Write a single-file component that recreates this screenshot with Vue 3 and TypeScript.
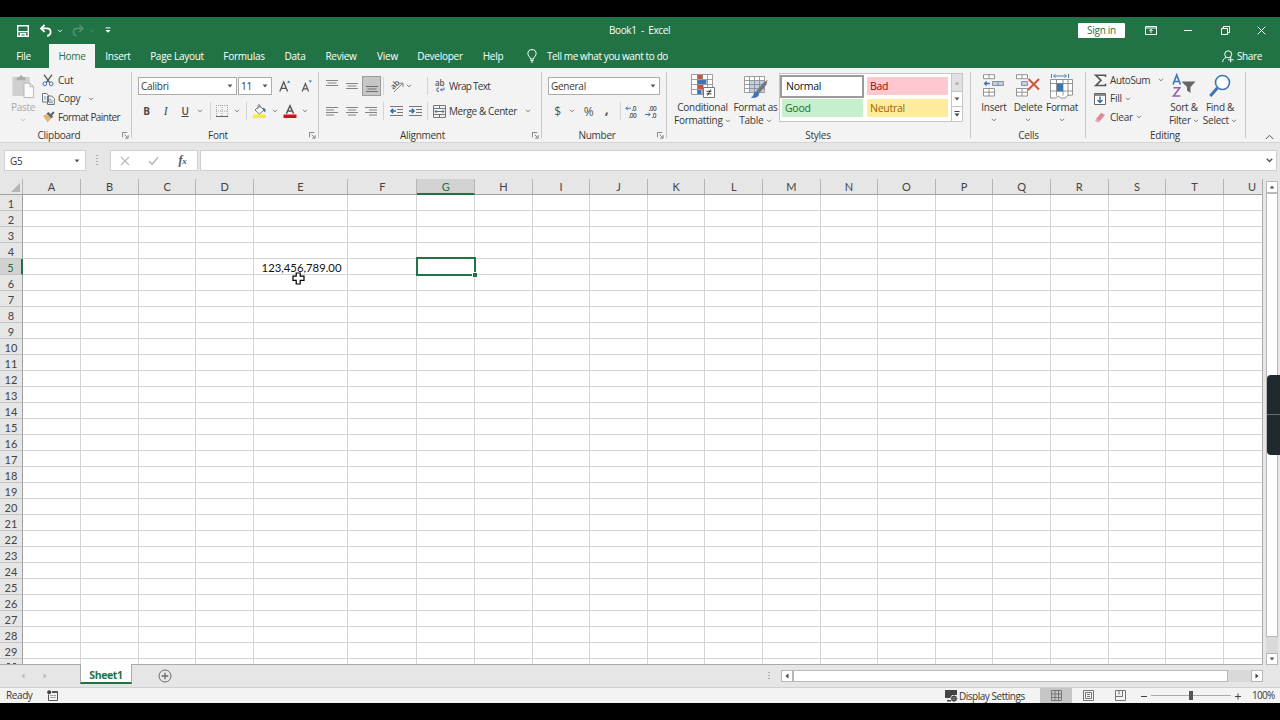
<script setup lang="ts">
interface Column {
  name: string
  width: number
}

const tabs: string[] = ['File', 'Home', 'Insert', 'Page Layout', 'Formulas', 'Data', 'Review', 'View', 'Developer', 'Help']

const defaultWidth = 57.6
const customWidths: Record<string, number> = { A: 58.2, E: 94.1, F: 69.4 }
const columns: Column[] = 'ABCDEFGHIJKLMNOPQRSTU'
  .split('')
  .map((name) => ({ name, width: customWidths[name] ?? defaultWidth }))
const rows: number[] = Array.from({ length: 29 }, (_, i) => i + 1)

const activeColumn = 'G'
const activeRow = 5
const values: Record<string, string> = { E5: '123,456,789.00' }
</script>

<template>
  <div class="screen">
    <svg class="defs" width="0" height="0">
      <symbol id="chev" viewBox="0 0 6 4"><path d="M1 .8 3 2.8 5 .8" fill="none" stroke="currentColor" stroke-width=".9" /></symbol>
      <symbol id="tri" viewBox="0 0 6 4"><path d="M.6.5h4.8L3 3.4z" fill="currentColor" /></symbol>
      <symbol id="launch" viewBox="0 0 8 8"><path d="M.5 6V.5H6M3 3l3.6 3.6M7 3.6V7H3.6" fill="none" stroke="#666" stroke-width=".9" /></symbol>
    </svg>

    <header class="titlebar">
      <div class="quick">
        <svg width="14" height="14" viewBox="0 0 14 14" fill="none" stroke="#fff" stroke-width="1.4"><path d="M1.7 1.7h10.6v10.6H1.7zM2 7.6h10M4.6 12V9.8h4.8V12" /></svg>
        <svg class="undo" width="14" height="14" viewBox="0 0 14 14" fill="none" stroke="#fff" stroke-width="1.8"><path d="M5.6 1 2 4.4l3.6 3.4M2.2 4.4h5.6c5 0 5 6.6.4 7.6" /></svg>
        <svg class="chev"><use href="#chev" /></svg>
        <svg class="redo dim" width="14" height="14" viewBox="0 0 14 14" fill="none" stroke="#fff" stroke-width="1.6"><path d="M8.4 1 12 4.4 8.4 7.8M11.8 4.4H6.2c-5 0-5 6.6-.4 7.6" /></svg>
        <svg class="chev dim"><use href="#chev" /></svg>
        <svg class="more" width="6" height="7" viewBox="0 0 6 7"><path d="M.6.9h4.8" stroke="#fff" /><path d="M.4 3h5.2L3 5.8z" fill="#fff" /></svg>
      </div>
      <div class="title">Book1&nbsp; -&nbsp; Excel</div>
      <div class="window">
        <button class="signin">Sign in</button>
        <svg width="12" height="9" viewBox="0 0 12 9" fill="none" stroke="#fff"><path d="M.5.5h11v8H.5zM.5 2h11M6 7V3.4M4.3 5 6 3.3 7.7 5" /></svg>
        <svg width="10" height="9" viewBox="0 0 10 9" stroke="#fff"><path d="M1 4.5h8" /></svg>
        <svg width="9" height="9" viewBox="0 0 9 9" fill="none" stroke="#fff"><path d="M.5 2.5h6v6h-6zM2.3 2.5V.5h6.2v6.2H6.6" /></svg>
        <svg width="9" height="9" viewBox="0 0 9 9" stroke="#fff"><path d="m.7.7 7.6 7.6M8.3.7.7 8.3" /></svg>
      </div>
    </header>

    <nav class="tabs">
      <span v-for="tab in tabs" :key="tab" class="tab" :class="{ active: tab === 'Home' }">{{ tab }}</span>
      <svg class="bulb" width="10" height="14" viewBox="0 0 10 14" fill="none" stroke="#fff"><path d="M3.3 10V8.9C2.5 7.7.9 6.7.9 4.7a4.1 4.1 0 0 1 8.2 0c0 2-1.6 3-2.4 4.2V10zM3.4 11.4h3.2M3.8 13h2.4" /></svg>
      <span class="tellme">Tell me what you want to do</span>
      <span class="share">
        <svg width="12" height="13" viewBox="0 0 12 13" fill="none" stroke="#fff"><circle cx="6.2" cy="4.3" r="3.5" /><path d="M.6 12c.3-2.4 1.5-3.8 3.6-4.5M8.7 7v5.4M6 9.8h5.6" /></svg>
        Share
      </span>
    </nav>

    <section class="ribbon">
      <div class="group clipboard">
        <div class="body">
          <div class="big paste">
            <svg width="24" height="26" viewBox="0 0 24 26"><path d="M1 3h18v7h-6v13H1z" fill="#d0ced0" /><path d="M5.5 3.5h2.7C8.2.6 11.8.6 11.8 3.5h2.7v3h-9z" fill="#aaa" /><path d="M13 9.5h6.500l3.500 3.500v11.500H13zM19.300 9.700v3.600H23" fill="#fafafa" stroke="#b5b5b5" /></svg>
            <span>Paste</span>
            <svg class="chev"><use href="#chev" /></svg>
          </div>
          <div class="list">
            <div class="line">
              <svg width="12" height="13" viewBox="0 0 12 13" fill="none"><path d="m2 .7 5.7 8M10 .7l-5.7 8" stroke="#555" stroke-width="1.3" /><circle cx="2.8" cy="9.8" r="1.9" stroke="#3b75b5" /><circle cx="9.2" cy="9.8" r="1.9" stroke="#3b75b5" /></svg>
              <span>Cut</span>
            </div>
            <div class="line">
              <svg width="13" height="12" viewBox="0 0 13 12" fill="#f8f8f8" stroke="#666" stroke-width=".9"><path d="M.5.5h4.200l1.800 1.800v6.700h-6zM5.500 3h4.300L12.300 5.500v6H5.500z" /><path d="M1.800 4h2.500M1.800 6h2.500M7 6.300h2M7 8h4M7 9.700h4" stroke="#3b75b5" stroke-width=".7" /></svg>
              <span>Copy</span>
              <svg class="chev"><use href="#chev" /></svg>
            </div>
            <div class="line">
              <svg width="13" height="12" viewBox="0 0 13 12"><path d="m1 5 3.500-2L9 7.500l-3.300 4C4 9 3 7.500 1 5z" fill="#e5b577" /><path d="m4.500 2.500 2-1.500 4.700 4.500-2 2z" fill="#666" /><path d="m8.500 3.200 2.700-2.700 1.300 1.300-2.600 2.800z" fill="#555" /></svg>
              <span class="long">Format Painter</span>
            </div>
          </div>
        </div>
        <div class="caption">Clipboard<svg class="launch"><use href="#launch" /></svg></div>
      </div>

      <div class="group font">
        <div class="body stacked">
          <div class="row r1">
            <div class="combo">Calibri<svg class="tri"><use href="#tri" /></svg></div>
            <div class="combo">11<svg class="tri"><use href="#tri" /></svg></div>
            <svg width="12" height="13" viewBox="0 0 12 13"><path d="m.8 11.500 3.900-9.500 3.900 9.500M2.200 8.300h5" fill="none" stroke="#555" stroke-width="1.300" /><path d="M8 2.800 9.700.5 11.400 2.800z" fill="#3b75b5" /></svg>
            <svg width="12" height="13" viewBox="0 0 12 13"><path d="m1.200 11.500 3.200-8 3.200 8M2.500 8.800h3.900" fill="none" stroke="#555" stroke-width="1.200" /><path d="M7.600.5H11L9.300 2.800z" fill="#3b75b5" /></svg>
          </div>
          <div class="row r2">
            <b class="glyph">B</b>
            <i class="glyph">I</i>
            <u class="glyph">U</u>
            <svg class="chev"><use href="#chev" /></svg>
            <i class="sep" />
            <svg width="12" height="12" viewBox="0 0 12 12" fill="none"><path d="M.5 0v12M6 0v12M11.500 0v12M0 .5h12M0 6h12" stroke="#aaa" stroke-dasharray="1 1" /><path d="M0 11.500h12" stroke="#666" /></svg>
            <svg class="chev"><use href="#chev" /></svg>
            <i class="sep" />
            <svg width="14" height="14" viewBox="0 0 14 14"><path d="M0 10.500h13V14H0z" fill="#f7ee33" /><path d="m2 6 4.800-4.300 4 4.300L6.500 10z" fill="#fafafa" stroke="#777" /><path d="M5 5V1.500c0-1.300 2-1.300 2 0V4" fill="none" stroke="#777" stroke-width=".8" /><path d="M10 3.500c2.500.6 3.100 2.500 2.300 5L10 6.500z" fill="#4a7396" /></svg>
            <svg class="chev"><use href="#chev" /></svg>
            <svg width="14" height="14" viewBox="0 0 14 14"><path d="M.5 10.500h13V14H.5z" fill="#c8141c" /><path d="m3.400 9.600 3.600-8 3.600 8M4.600 7h4.800" fill="none" stroke="#555" stroke-width="1.400" /></svg>
            <svg class="chev"><use href="#chev" /></svg>
          </div>
        </div>
        <div class="caption">Font<svg class="launch"><use href="#launch" /></svg></div>
      </div>

      <div class="group alignment">
        <div class="body stacked">
          <div class="row r1">
            <svg width="12" height="12" viewBox="0 0 12 12" stroke="#777" stroke-width=".9"><path d="M0 .5h12M1.500 3h9M0 5.500h12" /></svg>
            <svg width="12" height="12" viewBox="0 0 12 12" stroke="#777" stroke-width=".9"><path d="M0 3.500h12M1.500 6h9M0 8.500h12" /></svg>
            <span class="pressed"><svg width="12" height="12" viewBox="0 0 12 12" stroke="#666" stroke-width=".9"><path d="M0 6.500h12M1.500 9h9M0 11.500h12" /></svg></span>
            <i class="sep" />
            <svg width="14" height="13" viewBox="0 0 14 13"><path d="M4 12 12.500 3.500M13 7V3.200H9.500" fill="none" stroke="#777" stroke-width=".9" /><text class="tiny" transform="translate(3.5 10)rotate(-45)">ab</text></svg>
            <svg class="chev"><use href="#chev" /></svg>
            <i class="sep" />
            <svg width="12" height="14" viewBox="0 0 12 14"><text x="1" y="7" class="tiny">ab</text><path d="M5 9H3.500Q1.700 10.700 3.500 12.300H5" fill="none" stroke="#555" /><path d="M10 8.500v2.300H6.500M8 9.300 6.500 10.800 8 12.300" fill="none" stroke="#3b75b5" /></svg>
            <span class="text">Wrap Text</span>
          </div>
          <div class="row r2">
            <svg width="12" height="11" viewBox="0 0 12 11" stroke="#777" stroke-width=".9"><path d="M0 1.500h12M0 4h8M0 6.500h12M0 9h8" /></svg>
            <svg width="12" height="11" viewBox="0 0 12 11" stroke="#777" stroke-width=".9"><path d="M0 1.500h12M2 4h8M0 6.500h12M2 9h8" /></svg>
            <svg width="12" height="11" viewBox="0 0 12 11" stroke="#777" stroke-width=".9"><path d="M0 1.500h12M4 4h8M0 6.500h12M4 9h8" /></svg>
            <i class="sep" />
            <svg width="13" height="11" viewBox="0 0 13 11" fill="none" stroke="#777"><path d="M0 .5h13M7 3.500h6M7 6.500h6M0 9.500h13" /><path d="M6 5H1M3.200 2.700.9 5l2.300 2.300" stroke="#2e6da4" stroke-width="1.400" /></svg>
            <svg width="13" height="11" viewBox="0 0 13 11" fill="none" stroke="#777"><path d="M0 .5h13M7 3.500h6M7 6.500h6M0 9.500h13" /><path d="M0 5h5M2.800 2.700 5.100 5 2.800 7.300" stroke="#2e6da4" stroke-width="1.400" /></svg>
            <i class="sep" />
            <svg width="13" height="13" viewBox="0 0 13 13" fill="none" stroke="#777"><path d="M.5.5h12v12H.5zM.5 3.500h12M.5 9.500h12M6.500 0v3.500M6.500 9.500V13" /><path d="M2 6.500h9M3.500 5 2 6.500 3.500 8M9.500 5 11 6.500 9.500 8" stroke="#4a7396" /></svg>
            <span class="text">Merge &amp; Center</span>
            <svg class="chev"><use href="#chev" /></svg>
          </div>
        </div>
        <div class="caption">Alignment<svg class="launch"><use href="#launch" /></svg></div>
      </div>

      <div class="group number">
        <div class="body stacked">
          <div class="row r1">
            <div class="combo">General<svg class="tri"><use href="#tri" /></svg></div>
          </div>
          <div class="row r2">
            <span class="sym">$</span>
            <svg class="chev"><use href="#chev" /></svg>
            <span class="sym">%</span>
            <b class="sym comma">,</b>
            <i class="sep" />
            <svg width="13" height="13" viewBox="0 0 13 13"><path d="M6 3.300H1M2.700 1.500.9 3.300l1.800 1.800" fill="none" stroke="#3b75b5" /><text x="6.500" y="6" class="digits">.0</text><text x="3.500" y="12.500" class="digits">.00</text></svg>
            <svg width="13" height="13" viewBox="0 0 13 13"><path d="M0 9.500h5M3.300 7.700l1.800 1.800-1.800 1.800" fill="none" stroke="#3b75b5" /><text x="3.500" y="6" class="digits">.00</text><text x="6.500" y="12.500" class="digits">.0</text></svg>
          </div>
        </div>
        <div class="caption">Number<svg class="launch"><use href="#launch" /></svg></div>
      </div>

      <div class="group styles">
        <div class="body">
          <div class="big cond">
            <svg width="24" height="25" viewBox="0 0 24 25"><path d="M.5.5h21v20H.5zM.5 5.500h21M.5 10.500h21M.5 15.500h21M6.500.5v20M11.500.5v20M16.500.5v20" fill="#fff" stroke="#888" stroke-width=".8" /><path d="M6.500 1h5v4h-5zM6.500 11h6v4h-6z" fill="#c8523d" /><path d="M6.500 6h9v4h-9zM6.500 16h4v4h-4z" fill="#3b75b5" /><path d="M12.500 13.500h11v10h-11z" fill="#fff" stroke="#777" /><path d="M15.500 17.300h5M15.500 19.800h5M19.700 15.500l-3.200 6" stroke="#333" /></svg>
            <span>Conditional</span>
            <span>Formatting <svg class="chev"><use href="#chev" /></svg></span>
          </div>
          <div class="big fmt">
            <svg width="24" height="25" viewBox="0 0 24 25"><path d="M.5 2.500h20v16H.5z" fill="#fff" /><path d="M5.500 6.500h15v12h-15z" fill="#bdd0e8" /><path d="M.5 2.500h20v16H.5zM.5 6.500h20M.5 10.500h20M.5 14.500h20M5.500 2.500v16M10.500 2.500v16M15.500 2.500v16" fill="none" stroke="#888" stroke-width=".8" /><path d="m23.500 6-1 4.500-7.300 9-3-2.500 6.800-8z" fill="#777" /><path d="M11.500 17.500c2.800-.5 4.200 1.800 3.200 4-1.500 2.500-5 2.800-8.200 2 3.500-.8 2.500-4.500 5-6z" fill="#3b75b5" /></svg>
            <span>Format as</span>
            <span>Table <svg class="chev"><use href="#chev" /></svg></span>
          </div>
          <div class="gallery">
            <div class="swatches">
              <span class="sw normal">Normal</span>
              <span class="sw bad">Bad</span>
              <span class="sw good">Good</span>
              <span class="sw neutral">Neutral</span>
            </div>
            <div class="scroller">
              <span class="off"><svg class="tri up"><use href="#tri" /></svg></span>
              <span><svg class="tri"><use href="#tri" /></svg></span>
              <span><svg width="6" height="6" viewBox="0 0 6 6"><path d="M.5.5h5" stroke="#444" /><path d="M.5 2.500h5L3 5.500z" fill="#444" /></svg></span>
            </div>
          </div>
        </div>
        <div class="caption">Styles</div>
      </div>

      <div class="group cells">
        <div class="body">
          <div class="big">
            <svg width="22" height="25" viewBox="0 0 22 25" fill="#fff" stroke="#888" stroke-width=".9"><path d="M.5.700h11v4H.5zM6 .7v4M.5 14.500h11v7.500H.5zM6 14.500V22M.5 18.200h11" /><path d="M9.500 7.500h11v4h-11zM15 7.500v4" fill="#bdd0e8" /><path d="M7 9.500H1.500M3.700 7.500 1.500 9.500l2.200 2" fill="none" stroke="#3b75b5" stroke-width="1.300" /></svg>
            <span>Insert</span>
            <svg class="chev"><use href="#chev" /></svg>
          </div>
          <div class="big">
            <svg width="24" height="25" viewBox="0 0 24 25" fill="#fff" stroke="#888" stroke-width=".9"><path d="M.5.700h11v4H.5zM6 .7v4M.5 14.500h11v7.500H.5zM6 14.500V22M.5 18.200h11" /><path d="M5.500 7.500h6v4h-6z" fill="#bdd0e8" /><path d="m12.500 5 10.500 10.500M23 5 12 16" fill="none" stroke="#d2553a" stroke-width="2" /></svg>
            <span>Delete</span>
            <svg class="chev"><use href="#chev" /></svg>
          </div>
          <div class="big">
            <svg width="24" height="25" viewBox="0 0 24 25" fill="#fff" stroke="#888" stroke-width=".9"><path d="M.5 5.500h22v15.500l-5 .5-2 2.500h-5l-2-2-3 2h-5zM.5 9.500h22M.5 17h22M6.500 5.500v16M13 5.500v16M18 5.500v16" /><path d="M7 9.500h6v8H7z" fill="#3b75b5" stroke="none" /><path d="M1.500 0v4M18.500 0v4M4 2h12M5.500.3 3.500 2l2 1.700M14.500.3l2 1.700-2 1.700" fill="none" stroke="#3b75b5" /></svg>
            <span>Format</span>
            <svg class="chev"><use href="#chev" /></svg>
          </div>
        </div>
        <div class="caption">Cells</div>
      </div>

      <div class="group editing">
        <div class="body">
          <div class="list">
            <div class="line wide">
              <svg width="13" height="13" viewBox="0 0 13 13" fill="none" stroke="#555" stroke-width="1.600"><path d="M11.500 3V1.300H1.800L7 6.300 1.800 11.500h9.700V9.700" /></svg>
              <span>AutoSum</span>
              <svg class="chev"><use href="#chev" /></svg>
            </div>
            <div class="line">
              <svg width="12" height="12" viewBox="0 0 12 12" fill="#fff" stroke="#666"><path d="M.5.5h11v11H.5z" /><path d="M.5 2h11" stroke-width="1.500" /><path d="M6 3.500v6M3.500 7 6 9.500 8.500 7" fill="none" stroke="#2e6da4" stroke-width="1.400" /></svg>
              <span>Fill</span>
              <svg class="chev"><use href="#chev" /></svg>
            </div>
            <div class="line">
              <svg width="12" height="11" viewBox="0 0 12 11"><path d="M7.200.8 10.800 3 5.800 9.300 2 7z" fill="#e4839a" /><path d="m2 7 3.800 2.300-.6.900H3L1 8.700z" fill="#e8a9b8" /></svg>
              <span>Clear</span>
              <svg class="chev"><use href="#chev" /></svg>
            </div>
          </div>
          <div class="big sort">
            <svg width="24" height="25" viewBox="0 0 24 25" fill="none"><path d="M1 10.500 4.700 1l3.700 9.500M2.300 7.500h4.900" stroke="#3b75b5" stroke-width="1.600" /><path d="M1.500 13.700h6.300L1.500 22h6.800" stroke="#9b5bb0" stroke-width="1.600" /><path d="M9.500 7.500h14l-5 5.500v6l-3.500-2.500V13z" fill="#666" /></svg>
            <span>Sort &amp;</span>
            <span>Filter <svg class="chev"><use href="#chev" /></svg></span>
          </div>
          <div class="big find">
            <svg width="24" height="25" viewBox="0 0 24 25"><circle cx="14.500" cy="8.500" r="7" fill="#fff" stroke="#3b75b5" stroke-width="1.600" /><path d="m9.300 14-7 8" stroke="#3b75b5" stroke-width="3" /></svg>
            <span>Find &amp;</span>
            <span>Select <svg class="chev"><use href="#chev" /></svg></span>
          </div>
        </div>
        <div class="caption">Editing</div>
      </div>
      <svg class="collapse" width="9" height="6" viewBox="0 0 9 6" fill="none" stroke="#555"><path d="m.8 5 3.700-3.700L8.200 5" /></svg>
    </section>

    <section class="formula">
      <div class="namebox">G5<svg class="tri"><use href="#tri" /></svg></div>
      <i class="dots" />
      <div class="fx">
        <svg width="10" height="10" viewBox="0 0 10 10" stroke="#b8b8b8" stroke-width="1.200"><path d="m1 1 8 8M9 1 1 9" /></svg>
        <svg width="11" height="10" viewBox="0 0 11 10" fill="none" stroke="#b8b8b8" stroke-width="1.500"><path d="m1 5 3 3.300L10 1.200" /></svg>
        <span class="fxmark">f<small>x</small></span>
      </div>
      <div class="input"><svg width="7" height="5" viewBox="0 0 7 5" fill="none" stroke="#555" stroke-width="1.400"><path d="m.8.8 2.700 2.700L6.200.8" /></svg></div>
    </section>

    <main class="workspace">
      <div class="sheet">
        <div class="heads">
          <div class="corner"><svg width="9" height="9" viewBox="0 0 9 9"><path d="M9 0v9H0z" fill="#b4b4b4" /></svg></div>
          <div v-for="c in columns" :key="c.name" class="head" :class="{ on: c.name === activeColumn }" :style="{ width: c.width + 'px' }">{{ c.name }}</div>
        </div>
        <div v-for="r in rows" :key="r" class="gridrow">
          <div class="rownum" :class="{ on: r === activeRow }">{{ r }}</div>
          <div v-for="c in columns" :key="c.name" class="cell" :style="{ width: c.width + 'px' }">
            {{ values[c.name + r] }}
            <i v-if="c.name === activeColumn && r === activeRow" class="selection" />
          </div>
        </div>
        <div class="gridrow last">
          <div class="rownum"><i /><i /></div>
          <div v-for="c in columns" :key="c.name" class="cell" :style="{ width: c.width + 'px' }" />
        </div>
      </div>
      <div class="vscroll">
        <span class="btn"><svg class="tri up"><use href="#tri" /></svg></span>
        <span class="thumb" />
        <span class="btn"><svg class="tri"><use href="#tri" /></svg></span>
      </div>
      <svg class="pointer" width="13" height="13" viewBox="0 0 13 13"><path d="M4.200 1h4v3.200H12v4.200H8.200V12h-4V8.400H1V4.200h3.200z" fill="#fff" stroke="#000" stroke-width="1.200" /></svg>
      <div class="dock"><i /></div>
    </main>

    <section class="sheetbar">
      <svg class="nav" width="4" height="6" viewBox="0 0 4 6"><path d="M3.500.5v5L.5 3z" fill="#b9b9b9" /></svg>
      <svg class="nav" width="4" height="6" viewBox="0 0 4 6"><path d="M.5.5v5l3-2.500z" fill="#b9b9b9" /></svg>
      <span class="sheettab">Sheet1</span>
      <svg class="add" width="14" height="14" viewBox="0 0 14 14" fill="none" stroke="#6b6b6b"><circle cx="7" cy="7" r="6" /><path d="M7 3.700v6.600M3.700 7h6.600" stroke-width="1.300" /></svg>
      <i class="dots" />
      <div class="hscroll">
        <span class="btn"><svg width="4" height="6" viewBox="0 0 4 6"><path d="M3.500.5v5L.5 3z" fill="#444" /></svg></span>
        <span class="thumb" />
        <span class="btn"><svg width="4" height="6" viewBox="0 0 4 6"><path d="M.5.5v5l3-2.500z" fill="#444" /></svg></span>
      </div>
    </section>

    <footer class="status">
      <span class="ready">Ready</span>
      <svg width="11" height="11" viewBox="0 0 11 11"><path d="M1.500 4.500v6h9v-9H5.500" fill="none" stroke="#555" /><path d="M5 1h5.500v2H5z" fill="#555" /><circle cx="2.200" cy="2.200" r="2" fill="#444" /><path d="M3.500 5.500h6M3.500 7.500h6" stroke="#555" stroke-dasharray="1 1" /></svg>
      <span class="display">
        <svg width="13" height="12" viewBox="0 0 13 12"><path d="M0 0h12v5H7l-2 3H0zM2 10h4v1.500H2z" fill="#444" /><circle cx="9" cy="8.500" r="2.200" fill="none" stroke="#444" stroke-width="1.300" /><path d="M9 5v7M5.600 8.500h7M6.600 6l4.800 5M11.400 6l-4.800 5" stroke="#444" stroke-width=".7" /></svg>
        Display Settings
      </span>
      <span class="view on"><svg width="11" height="11" viewBox="0 0 11 11" fill="none" stroke="#777"><path d="M.5.5h10v10H.5zM4 .5v10M7.500.5v10M.5 4h10M.5 7.500h10" /></svg></span>
      <span class="view"><svg width="11" height="11" viewBox="0 0 11 11" fill="none" stroke="#777"><path d="M.5.5h10v10H.5zM2.500 2.500h6v6h-6zM4 4.500h3M4 6.500h3" /></svg></span>
      <span class="view"><svg width="11" height="11" viewBox="0 0 11 11" fill="none" stroke="#777"><path d="M.5.5h10v10H.5zM.5 6.500h7v-6M4 .5v4" /></svg></span>
      <span class="zoom">
        <svg width="8" height="8" viewBox="0 0 8 8" stroke="#444"><path d="M1 4.500h6" /></svg>
        <span class="track"><i /></span>
        <svg width="8" height="8" viewBox="0 0 8 8" stroke="#444"><path d="M1 4.500h6M4 1.500v6" /></svg>
      </span>
      <span class="percent">100%</span>
    </footer>
  </div>
</template>

<style>
body {
  background: #000;
  overflow: hidden;
}
</style>

<style scoped>
.screen {
  box-sizing: border-box;
  width: 1280px;
  height: 720px;
  padding: 17px 0;
  overflow: hidden;
  background: #000;
  color: #383838;
  display: flex;
  flex-direction: column;
  font: 10px/13px 'Open Sans', 'Noto Sans', sans-serif;
  letter-spacing: -0.27px;
  white-space: nowrap;
}
.screen * {
  box-sizing: border-box;
}
svg {
  display: block;
  flex: none;
  overflow: visible;
}
.defs {
  position: absolute;
}
.chev {
  width: 6px;
  height: 4px;
  color: #666;
}
.tri {
  width: 6px;
  height: 4px;
  color: #555;
}
.up {
  transform: rotate(180deg);
}
.dim {
  opacity: 0.22;
}

/* title bar */
.titlebar {
  height: 27px;
  flex: none;
  background: #217346;
  color: #fff;
  display: grid;
  grid-template-columns: 1fr 80px 1fr;
  align-items: center;
}
.quick {
  display: flex;
  align-items: center;
  padding-left: 16px;
}
.quick .chev {
  margin-left: 4px;
  color: #fff;
}
.undo {
  margin-left: 9px;
}
.redo {
  margin-left: 8px;
}
.more {
  margin-left: 10px;
}
.title {
  text-align: center;
  letter-spacing: -0.38px;
  padding: 0 1px 1px 0;
}
.window {
  display: grid;
  grid-template-columns: 47px 51px 24px 50px 23px;
  justify-content: end;
  justify-items: center;
  align-items: center;
  padding: 0 7px 1px 0;
}
.signin {
  width: 47px;
  height: 15px;
  padding: 0;
  border: 0;
  border-radius: 1px;
  background: #fff;
  color: #217346;
  font: inherit;
  letter-spacing: inherit;
}

/* ribbon tabs */
.tabs {
  height: 24px;
  flex: none;
  background: #217346;
  color: #fff;
  display: grid;
  grid-template-columns: 49px 46px 46px 72px 62px 40px 52px 41px 64px 42px 33px 1fr 57px;
  align-items: center;
}
.tab {
  height: 24px;
  line-height: 24px;
  text-align: center;
}
.tab:first-child {
  padding-right: 2px;
}
.tab.active {
  background: #f3f3f3;
  color: #217346;
}
.bulb {
  margin-left: 13px;
}
.tellme {
  letter-spacing: -0.39px;
}
.share {
  display: flex;
  align-items: center;
  gap: 3px;
  margin-left: -1px;
  letter-spacing: -0.4px;
}

/* ribbon */
.ribbon {
  height: 75px;
  flex: none;
  background: #f3f3f3;
  border-bottom: 1px solid #d5d5d5;
  display: flex;
}
.group {
  flex: none;
  height: 75px;
  display: flex;
  flex-direction: column;
  position: relative;
}
.group::after {
  content: '';
  position: absolute;
  right: 0;
  top: 4px;
  height: 66px;
  border-right: 1px solid #c8c8c8;
}
.body {
  height: 60px;
  display: flex;
}
.body > * {
  flex: none;
}
.stacked {
  flex-direction: column;
}
.caption {
  height: 14px;
  line-height: 14px;
  text-align: center;
  position: relative;
}
.launch {
  position: absolute;
  right: 3px;
  top: 4px;
  width: 7px;
  height: 7px;
}
.clipboard {
  width: 132px;
}
.clipboard .caption {
  padding-right: 14px;
}
.font {
  width: 187px;
}
.font .caption {
  padding-right: 15px;
}
.alignment {
  width: 223px;
}
.alignment .caption {
  padding-right: 16px;
}
.number {
  width: 125px;
}
.number .caption {
  padding-right: 15px;
}
.styles {
  width: 304px;
}
.styles .caption {
  padding-right: 2px;
}
.cells {
  width: 115px;
}
.editing {
  width: 160px;
}
.editing .caption {
  padding-right: 2px;
}
.big {
  display: flex;
  flex-direction: column;
  align-items: center;
  padding-top: 6px;
}
.big > svg:first-child {
  height: 25px;
  margin-bottom: 2px;
}
.big > .chev {
  margin-top: 4px;
}
.big span .chev {
  display: inline-block;
  vertical-align: 1px;
}
.paste {
  width: 46px;
  color: #a9a9a9;
}
.paste .chev {
  color: #b5b5b5;
}
.list {
  padding-top: 3px;
}
.clipboard .list {
  margin-left: -4px;
}
.line {
  height: 18.5px;
  display: grid;
  grid-template-columns: 16px auto 22px;
  justify-content: start;
  align-items: center;
}
.line .chev {
  justify-self: center;
}
.long {
  letter-spacing: -0.55px;
}
.row {
  display: grid;
  align-items: center;
  justify-items: center;
  justify-content: start;
}
.r1 {
  height: 20px;
  margin-top: 8px;
}
.r2 {
  height: 20px;
  margin-top: 5px;
}
.combo {
  width: 100%;
  height: 18px;
  background: #fff;
  border: 1px solid #ababab;
  padding: 0 3px 0 2px;
  display: flex;
  align-items: center;
  justify-content: space-between;
}
.sep {
  width: 1px;
  height: 18px;
  background: #d4d4d4;
}
.font .r1 {
  grid-template-columns: 99px 34px 24px 18px;
  column-gap: 1px;
  padding-left: 6px;
}
.font .r2 {
  grid-template-columns: 19px 19px 20px 10px 10px 14px 16px 3px 23px 7px 24px 6px;
  padding-left: 5px;
}
.glyph {
  font-size: 10px;
  color: #484848;
}
i.glyph {
  font-family: 'Liberation Serif', serif;
  font-size: 12px;
}
u.glyph {
  font-weight: 600;
}
.alignment .row {
  display: flex;
  padding-left: 7px;
}
.alignment .row > :nth-child(2) {
  margin-left: 8px;
}
.alignment .r1 > :nth-child(3) {
  margin-left: 4px;
}
.alignment .r1 > :nth-child(4) {
  margin: 0 6px 0 2px;
}
.alignment .r1 > .chev {
  margin: 0 15px 0 2px;
}
.alignment .r1 > :nth-child(8) {
  margin: 0 3px 0 6px;
}
.alignment .r2 > :nth-child(3) {
  margin-left: 7px;
}
.alignment .r2 > :nth-child(4) {
  margin: 0 6px;
}
.alignment .r2 > :nth-child(6) {
  margin: 0 5px 0 6px;
}
.alignment .r2 > :nth-child(8) {
  margin: 0 3px 0 5px;
}
.alignment .r2 .text {
  width: 76px;
  letter-spacing: -0.4px;
}
.alignment .r1 .text {
  letter-spacing: -0.72px;
}
.pressed {
  width: 19px;
  height: 20px;
  background: #c6c6c6;
  border: 1px solid #9b9b9b;
  display: grid;
  place-items: center;
}
.tiny {
  font: 600 8px 'Open Sans', sans-serif;
  letter-spacing: -0.2px;
  fill: #555;
}
.digits {
  font: 600 6.5px 'Open Sans', sans-serif;
  letter-spacing: -0.5px;
  fill: #555;
}
.number .r1 {
  grid-template-columns: 112px;
  padding-left: 6px;
}
.number .r2 {
  grid-template-columns: 19px 9px 25px 11px 16px 6px 34px;
  padding-left: 6px;
}
.sym {
  font-size: 12px;
  color: #555;
}
.comma {
  margin-top: -6px;
  font-size: 14px;
}

/* styles group */
.cond {
  width: 71px;
}
.fmt {
  width: 35px;
}
.gallery {
  width: 184px;
  height: 49px;
  margin: 5px 0 0 6px;
  background: #fff;
  border: 1px solid #c6c6c6;
  display: flex;
}
.swatches {
  width: 171px;
  display: grid;
  grid-template: 24px 18px / 84px 81px;
  column-gap: 3px;
  row-gap: 1px;
  align-items: center;
  align-content: start;
}
.sw {
  height: 18px;
  padding-left: 3px;
  line-height: 18px;
  font-size: 10.5px;
}
.normal {
  height: 23px;
  padding-left: 4px;
  line-height: 19px;
  border: 2px solid #9b9b9b;
  background: #fff;
  color: #111;
}
.bad {
  background: #ffc7ce;
  color: #9c0006;
}
.good {
  margin: 0 1px 0 2px;
  background: #c6efce;
  color: #236b23;
}
.neutral {
  background: #ffeb9c;
  color: #9c6500;
}
.scroller {
  flex: 1;
  display: grid;
  grid-template-rows: 17px 15px 15px;
  border-left: 1px solid #c6c6c6;
}
.scroller span {
  display: grid;
  place-items: center;
}
.scroller span + span {
  border-top: 1px solid #c6c6c6;
}
.scroller .off {
  background: #e1e1e1;
}
.scroller .off .tri {
  color: #aaa;
}
.cells .body {
  padding-left: 6px;
}
.cells .big {
  width: 34px;
}
.editing .body {
  padding-left: 8px;
}
.editing .list {
  width: 71px;
}
.editing .line {
  grid-template-columns: 16px auto 13px;
}
.editing .line.wide {
  grid-template-columns: 16px 46px 10px;
  letter-spacing: -0.4px;
}
.sort {
  width: 38px;
}
.find {
  width: 34px;
}
.collapse {
  margin: 66px 0 0 19px;
}

/* formula bar */
.formula {
  height: 36px;
  flex: none;
  background: #e6e6e6;
  display: flex;
  padding: 7px 3px 0 4px;
}
.namebox,
.fx,
.input {
  height: 21px;
  background: #fff;
  border: 1px solid #cfcfcf;
  display: flex;
  align-items: center;
}
.namebox {
  width: 82px;
  justify-content: space-between;
  padding: 1px 5px 0;
}
.dots {
  width: 2px;
  height: 11px;
  background: repeating-linear-gradient(#aaa 0 1px, transparent 1px 3px);
}
.formula .dots {
  margin: 5px 12px 0 10px;
}
.fx {
  width: 88px;
  display: grid;
  grid-template-columns: 28px 29px 29px;
  justify-items: center;
}
.fxmark {
  font: italic bold 12px/18px 'Liberation Serif', serif;
  color: #555;
}
.fxmark small {
  font-size: 9px;
}
.input {
  flex: 1;
  margin-left: 2px;
  justify-content: flex-end;
  padding-right: 3px;
}

/* grid */
.workspace {
  height: 486px;
  flex: none;
  background: #e6e6e6;
  display: flex;
  position: relative;
  font-family: Lato, 'Open Sans', sans-serif;
  letter-spacing: 0;
}
.sheet {
  width: 1263px;
  height: 486px;
  overflow: hidden;
  border-right: 1px solid #ababab;
  border-bottom: 1px solid #ababab;
}
.heads {
  display: flex;
  width: 1290px;
  height: 16px;
  background: #e6e6e6;
  border-bottom: 1px solid #9f9f9f;
  color: #444;
  font-size: 11px;
  line-height: 16px;
}
.corner {
  width: 23px;
  flex: none;
  padding: 4px 0 0 11px;
  border-right: 1px solid #b5b5b5;
}
.head {
  flex: none;
  text-align: center;
  border-right: 1px solid #b5b5b5;
}
.head.on {
  height: 16px;
  background: #d2d2d2;
  border-bottom: 2px solid #217346;
  color: #217346;
}
.gridrow {
  display: flex;
  width: 1290px;
  height: 16px;
}
.rownum {
  width: 23px;
  flex: none;
  background: #e6e6e6;
  border-right: 1px solid #9f9f9f;
  border-bottom: 1px solid #c3c3c3;
  text-align: center;
  font-size: 11px;
  line-height: 17px;
  color: #444;
}
.rownum.on {
  background: #d2d2d2;
  color: #217346;
  border-right: 2px solid #217346;
}
.last .rownum {
  display: flex;
  justify-content: center;
  gap: 3px;
  padding-top: 4px;
}
.last .rownum i {
  width: 3px;
  height: 1px;
  background: #555;
}
.cell {
  flex: none;
  background: #fff;
  border-right: 1px solid #d4d4d4;
  border-bottom: 1px solid #d4d4d4;
  position: relative;
  text-align: right;
  padding-right: 5.6px;
  font-size: 11.3px;
  line-height: 17px;
  color: #111;
}
.selection {
  position: absolute;
  inset: -2px -2px -2px -1.5px;
  z-index: 1;
  border: 2px solid #217346;
}
.selection::after {
  content: '';
  position: absolute;
  right: -3px;
  bottom: -3px;
  width: 4px;
  height: 4px;
  background: #217346;
  border: solid #fff;
  border-width: 1px 0 0 1px;
  box-sizing: content-box;
}
.vscroll {
  width: 12px;
  height: 484px;
  margin: 2px 0 0 3px;
  display: flex;
  flex-direction: column;
  background: #d9d9d9;
}
.btn,
.thumb {
  background: #fff;
  border: 1px solid #b8b8b8;
  flex: none;
}
.btn {
  display: grid;
  place-items: center;
}
.vscroll .btn {
  height: 12px;
}
.vscroll .thumb {
  height: 444px;
  margin-bottom: 16px;
}
.pointer {
  position: absolute;
  left: 292px;
  top: 93px;
}
.dock {
  position: absolute;
  left: 1267px;
  top: 196px;
  width: 20px;
  height: 80px;
  border-radius: 4px;
  background: #20292d;
}
.dock i {
  display: block;
  height: 1px;
  margin-top: 39px;
  background: #667074;
}

/* sheet tabs */
.sheetbar {
  height: 22px;
  flex: none;
  background: #e6e6e6;
  display: flex;
  align-items: center;
}
.nav {
  margin-left: 21px;
}
.nav + .nav {
  margin-left: 18px;
}
.sheettab {
  width: 52px;
  height: 20px;
  margin: -1px 0 0 33px;
  background: #fff;
  border: solid #ababab;
  border-width: 0 1px;
  border-bottom: 2px solid #217346;
  color: #217346;
  font-weight: 700;
  font-size: 10.5px;
  line-height: 22px;
  letter-spacing: -0.4px;
  text-align: center;
  align-self: flex-start;
  position: relative;
}
.add {
  margin-left: 26px;
}
.sheetbar .dots {
  height: 8px;
  margin: 0 11px 0 596px;
}
.hscroll {
  width: 482px;
  height: 12px;
  display: flex;
  background: #d9d9d9;
}
.hscroll .btn {
  width: 12px;
}
.hscroll .thumb {
  width: 435px;
  margin-right: 23px;
}

/* status bar */
.status {
  height: 16px;
  flex: none;
  background: #f3f3f3;
  border-top: 1px solid #d0d0d0;
  display: flex;
  align-items: center;
  padding-left: 6px;
}
.ready {
  width: 41px;
  letter-spacing: -0.4px;
}
.display {
  display: flex;
  align-items: center;
  gap: 1px;
  margin-left: 887px;
  width: 95px;
  padding-top: 1px;
  letter-spacing: -0.48px;
}
.view {
  width: 32px;
  height: 15px;
  display: grid;
  place-items: center;
}
.view.on {
  background: #c6c6c6;
}
.zoom {
  display: flex;
  align-items: center;
  margin-left: 4px;
  gap: 3px;
}
.track {
  width: 80px;
  height: 10px;
  display: grid;
  place-items: center;
  background: linear-gradient(#aaa, #aaa) center / 100% 1px no-repeat;
}
.track i {
  width: 4px;
  height: 9px;
  background: #555;
}
.percent {
  margin-left: 10px;
  letter-spacing: -0.75px;
}
</style>
